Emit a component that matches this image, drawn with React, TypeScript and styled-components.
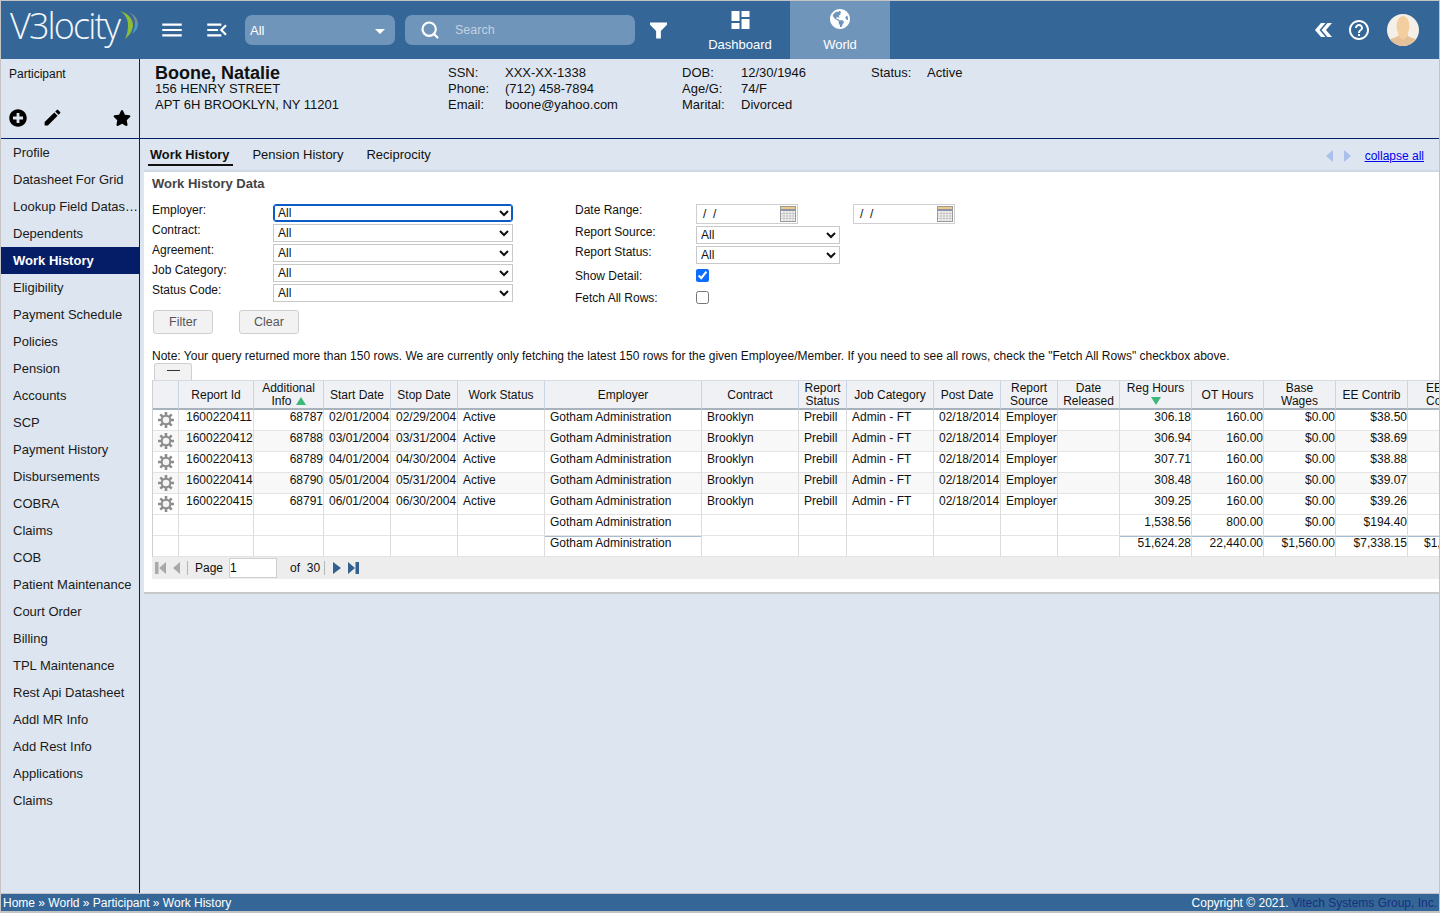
import React from 'react'
import styled, {createGlobalStyle} from 'styled-components'
import {FaGlobeAmericas, FaPlusCircle, FaStar} from 'react-icons/fa'
import {MdDashboard, MdEdit, MdHelpOutline, MdMenu, MdMenuOpen} from 'react-icons/md'
import {FiSearch} from 'react-icons/fi'

const GlobalStyle = createGlobalStyle`
  html, body {
    margin: 0;
    padding: 0;
    background: #c4c4c4;
  }
  body {
    font-family: "Liberation Sans", Arial, sans-serif;
    color: #111;
  }
`

const navItems = [
    'Profile', 'Datasheet For Grid', 'Lookup Field Datasheet', 'Dependents', 'Work History', 'Eligibility',
    'Payment Schedule', 'Policies', 'Pension', 'Accounts', 'SCP', 'Payment History', 'Disbursements', 'COBRA',
    'Claims', 'COB', 'Patient Maintenance', 'Court Order', 'Billing', 'TPL Maintenance', 'Rest Api Datasheet',
    'Addl MR Info', 'Add Rest Info', 'Applications', 'Claims',
]

interface Column {
    w: number
    label: string
    second?: string
    sort?: 'up' | 'down'
    cut?: boolean
}

const columns: Column[] = [
    {w: 26, label: ''},
    {w: 75, label: 'Report Id'},
    {w: 70, label: 'Additional', second: 'Info', sort: 'up'},
    {w: 67, label: 'Start Date'},
    {w: 67, label: 'Stop Date'},
    {w: 87, label: 'Work Status'},
    {w: 157, label: 'Employer'},
    {w: 97, label: 'Contract'},
    {w: 48, label: 'Report', second: 'Status'},
    {w: 87, label: 'Job Category'},
    {w: 67, label: 'Post Date'},
    {w: 57, label: 'Report', second: 'Source'},
    {w: 62, label: 'Date', second: 'Released'},
    {w: 72, label: 'Reg Hours', sort: 'down'},
    {w: 72, label: 'OT Hours'},
    {w: 72, label: 'Base', second: 'Wages'},
    {w: 72, label: 'EE Contrib'},
    {w: 72, label: 'EE', second: 'Contrib', cut: true},
]

const rows = [
    ['1600220411', '68787', '02/01/2004', '02/29/2004', '306.18', '$38.50'],
    ['1600220412', '68788', '03/01/2004', '03/31/2004', '306.94', '$38.69'],
    ['1600220413', '68789', '04/01/2004', '04/30/2004', '307.71', '$38.88'],
    ['1600220414', '68790', '05/01/2004', '05/31/2004', '308.48', '$39.07'],
    ['1600220415', '68791', '06/01/2004', '06/30/2004', '309.25', '$39.26'],
]

function Calendar() {
    return (
        <svg width="16" height="16" viewBox="0 0 16 16">
            <rect x="0.5" y="0.5" width="15" height="15" fill="#f4f4f4" stroke="#9a9a9a"/>
            <rect x="1" y="1" width="14" height="2" fill="#f0c987"/>
            <rect x="1" y="3" width="14" height="2" fill="#8d93a8"/>
            <path d="M1 7.5h14M1 10h14M1 12.5h14M4 5v10M7 5v10M10 5v10M13 5v10" stroke="#c9c9c9" strokeWidth="1"/>
        </svg>
    )
}

function Gear() {
    return (
        <svg width="18" height="18" viewBox="0 0 18 18">
            <path d="M9 1v16M1 9h16M3.300 3.300l11.400 11.400M14.700 3.300L3.300 14.700" stroke="#8c8c8c" strokeWidth="2.600"/>
            <circle cx="9" cy="9" r="5.300" fill="#8c8c8c"/>
            <circle cx="9" cy="9" r="3.300" fill="#f4f4f4"/>
        </svg>
    )
}

function PagerIcon({kind, active}: {kind: 'first' | 'prev' | 'next' | 'last', active?: boolean}) {
    const color = active ? '#33618f' : '#a9a9a9'
    return (
        <svg width="12" height="14" viewBox="0 0 12 14">
            {kind === 'first' && <path d="M0 1h3.500v12H0zM11 1v12L4 7z" fill={color}/>}
            {kind === 'prev' && <path d="M9 1v12L2 7z" fill={color}/>}
            {kind === 'next' && <path d="M1 1v12l8-6z" fill={color}/>}
            {kind === 'last' && <path d="M11 1H7.500v12H11zM0 1v12l7-6z" fill={color}/>}
        </svg>
    )
}

function Avatar() {
    return (
        <svg width="32" height="32" viewBox="0 0 32 32">
            <clipPath id="avatar-clip"><circle cx="16" cy="16" r="16"/></clipPath>
            <g clipPath="url(#avatar-clip)">
                <rect width="32" height="32" fill="#f4efe7"/>
                <path d="M0 32v-5c4-3 8-3 11-5v-3h10v3c3 2 7 2 11 5v5z" fill="#e4c199"/>
                <ellipse cx="16" cy="12" rx="6.500" ry="10" fill="#f3cf9f"/>
                <path d="M11 19h10v3l-5 4-5-4z" fill="#f3cf9f"/>
            </g>
        </svg>
    )
}

function Swoosh() {
    return (
        <SwooshSvg width="20" height="30" viewBox="0 0 20 30">
            <path d="M0 0c5 3 8 8 8 14 0 5-1 10-3 14 5-4 8-9 8-14C13 8 8 2 0 0z" fill="#8dbb3a"/>
            <path d="M9 1c4 3 6 7 6 12l3 1c0-6-3-10-9-13z" fill="#7d8a99"/>
            <path d="M15 12c0 4-1 7-3 11 4-3 6-6 6-10z" fill="#4b9cc4"/>
        </SwooshSvg>
    )
}

function DoubleChevron() {
    return (
        <svg width="17" height="14" viewBox="0 0 17 14">
            <path d="M6 0L0 7l6 7h4.500L4.500 7l6-7zM12.500 0l-6 7 6 7H17l-6-7 6-7z" fill="#fff"/>
        </svg>
    )
}

function Field({label, children}: {label: string, children: React.ReactNode}) {
    return (
        <FieldRow>
            <FieldLabel>{label}</FieldLabel>
            {children}
        </FieldRow>
    )
}

function Dropdown({wide, focused}: {wide?: boolean, focused?: boolean}) {
    return (
        <Select $wide={wide} $focused={focused} defaultValue="All">
            <option>All</option>
        </Select>
    )
}

export default function App() {
    return (
        <Page>
            <GlobalStyle/>
            <TopBar>
                <Logo>V3locity<Swoosh/></Logo>
                <BarIcon><MdMenu size={26}/></BarIcon>
                <BarIcon><MdMenuOpen size={26}/></BarIcon>
                <AllBox>All<Caret/></AllBox>
                <SearchBox><FiSearch size={20} strokeWidth={2.6}/><SearchText>Search</SearchText></SearchBox>
                <FunnelIcon width="17" height="18" viewBox="0 0 18 18">
                    <path d="M0 1h18v2.500l-6.500 6.500v8h-5v-8L0 3.500z" fill="#fff"/>
                </FunnelIcon>
                <BarTab>
                    <MdDashboard size={25}/>
                    <span>Dashboard</span>
                </BarTab>
                <BarTab $active>
                    <FaGlobeAmericas size={20}/>
                    <span>World</span>
                </BarTab>
                <BarRight>
                    <DoubleChevron/>
                    <MdHelpOutline size={24}/>
                    <Avatar/>
                </BarRight>
            </TopBar>
            <Main>
                <Aside>
                    <ParticipantBox>
                        <ParticipantTitle>Participant</ParticipantTitle>
                        <ParticipantTools>
                            <FaPlusCircle size={18}/>
                            <MdEdit size={21}/>
                            <StarWrap><FaStar size={18}/></StarWrap>
                        </ParticipantTools>
                    </ParticipantBox>
                    <NavList>
                        {navItems.map((item, i) => (
                            <NavItem key={i} $active={item === 'Work History'}>{item}</NavItem>
                        ))}
                    </NavList>
                </Aside>
                <Content>
                    <PersonHeader>
                        <PersonMain>
                            <PersonName>Boone, Natalie</PersonName>
                            <div>156 HENRY STREET</div>
                            <div>APT 6H BROOKLYN, NY 11201</div>
                        </PersonMain>
                        <PersonGrid $label={57} $value={177}>
                            <span>SSN:</span><span>XXX-XX-1338</span>
                            <span>Phone:</span><span>(712) 458-7894</span>
                            <span>Email:</span><span>boone@yahoo.com</span>
                        </PersonGrid>
                        <PersonGrid $label={59} $value={130}>
                            <span>DOB:</span><span>12/30/1946</span>
                            <span>Age/G:</span><span>74/F</span>
                            <span>Marital:</span><span>Divorced</span>
                        </PersonGrid>
                        <PersonGrid $label={56} $value={80}>
                            <span>Status:</span><span>Active</span>
                        </PersonGrid>
                    </PersonHeader>
                    <TabBar>
                        <Tab $active>Work History</Tab>
                        <Tab>Pension History</Tab>
                        <Tab>Reciprocity</Tab>
                        <TabEnd>
                            <TabArrow width="8" height="12" viewBox="0 0 8 12"><path d="M7 0v12L0 6z" fill="#a9c0ea"/></TabArrow>
                            <TabArrow width="8" height="12" viewBox="0 0 8 12"><path d="M1 0v12l7-6z" fill="#a9c0ea"/></TabArrow>
                            <CollapseLink href="#">collapse all</CollapseLink>
                        </TabEnd>
                    </TabBar>
                    <Panel>
                        <PanelTitle>Work History Data</PanelTitle>
                        <FilterForm>
                            <FilterColumn>
                                <Field label="Employer:"><Dropdown wide focused/></Field>
                                <Field label="Contract:"><Dropdown wide/></Field>
                                <Field label="Agreement:"><Dropdown wide/></Field>
                                <Field label="Job Category:"><Dropdown wide/></Field>
                                <Field label="Status Code:"><Dropdown wide/></Field>
                                <Buttons>
                                    <FormButton>Filter</FormButton>
                                    <FormButton>Clear</FormButton>
                                </Buttons>
                            </FilterColumn>
                            <FilterColumn $right>
                                <DateRow>
                                    <FieldLabel>Date Range:</FieldLabel>
                                    <DateBox>/ &nbsp;/<Calendar/></DateBox>
                                    <DateBox>/ &nbsp;/<Calendar/></DateBox>
                                </DateRow>
                                <RightRow><FieldLabel>Report Source:</FieldLabel><Dropdown/></RightRow>
                                <RightRow><FieldLabel>Report Status:</FieldLabel><Dropdown/></RightRow>
                                <CheckRow><FieldLabel>Show Detail:</FieldLabel><Check type="checkbox" defaultChecked/></CheckRow>
                                <CheckRow><FieldLabel>Fetch All Rows:</FieldLabel><Check type="checkbox"/></CheckRow>
                            </FilterColumn>
                        </FilterForm>
                        <Note>Note: Your query returned more than 150 rows. We are currently only fetching the latest 150 rows for the given Employee/Member. If you need to see all rows, check the "Fetch All Rows" checkbox above.</Note>
                        <GridToggle><span/></GridToggle>
                        <GridWrap>
                            <Grid>
                                <colgroup>
                                    {columns.map((c, i) => <col key={i} style={{width: c.w}}/>)}
                                </colgroup>
                                <thead>
                                    <tr>
                                        {columns.map((c, i) => (
                                            <Th key={i} $cut={c.cut}>
                                                {c.label}
                                                {c.second && <br/>}
                                                {c.second}
                                                {c.sort === 'down' && <br/>}
                                                {c.sort && <SortMark $down={c.sort === 'down'}/>}
                                            </Th>
                                        ))}
                                    </tr>
                                </thead>
                                <tbody>
                                    {rows.map((r, i) => (
                                        <Tr key={r[0]} $odd={i % 2 === 1}>
                                            <GearCell><Gear/></GearCell>
                                            <Td $pad={7}>{r[0]}</Td>
                                            <Td $right>{r[1]}</Td>
                                            <Td $pad={5}>{r[2]}</Td>
                                            <Td $pad={5}>{r[3]}</Td>
                                            <Td $pad={5}>Active</Td>
                                            <Td $pad={5}>Gotham Administration</Td>
                                            <Td $pad={5}>Brooklyn</Td>
                                            <Td $pad={5}>Prebill</Td>
                                            <Td $pad={5}>Admin - FT</Td>
                                            <Td $pad={5}>02/18/2014</Td>
                                            <Td $pad={5}>Employer</Td>
                                            <Td/>
                                            <Td $right>{r[4]}</Td>
                                            <Td $right>160.00</Td>
                                            <Td $right>$0.00</Td>
                                            <Td $right>{r[5]}</Td>
                                            <Td/>
                                        </Tr>
                                    ))}
                                    <Tr>
                                        <Td/><Td/><Td/><Td/><Td/><Td/>
                                        <Td $pad={5}>Gotham Administration</Td>
                                        <Td/><Td/><Td/><Td/><Td/><Td/>
                                        <Td $right>1,538.56</Td>
                                        <Td $right>800.00</Td>
                                        <Td $right>$0.00</Td>
                                        <Td $right>$194.40</Td>
                                        <Td/>
                                    </Tr>
                                    <Tr>
                                        <Td/><Td/><Td/><Td/><Td/><Td/>
                                        <Td $pad={5} $total>Gotham Administration</Td>
                                        <Td/><Td/><Td/><Td/><Td/><Td/>
                                        <Td $right $total>51,624.28</Td>
                                        <Td $right $total>22,440.00</Td>
                                        <Td $right $total>$1,560.00</Td>
                                        <Td $right $total>$7,338.15</Td>
                                        <Td $total $pad={16}>$1,560.00</Td>
                                    </Tr>
                                </tbody>
                            </Grid>
                        </GridWrap>
                        <Pager>
                            <PagerIcon kind="first"/>
                            <PagerIcon kind="prev"/>
                            <PagerSep/>
                            <span>Page</span>
                            <PageInput defaultValue="1"/>
                            <OfText>of &nbsp;30</OfText>
                            <PagerSep/>
                            <PagerIcon kind="next" active/>
                            <PagerIcon kind="last" active/>
                        </Pager>
                    </Panel>
                </Content>
            </Main>
            <Footer>
                <span>Home » World » Participant » Work History</span>
                <span>Copyright © 2021. <VendorName>Vitech Systems Group, Inc.</VendorName></span>
            </Footer>
        </Page>
    )
}

const Page = styled.div`
  width: 1440px;
  height: 913px;
  box-sizing: border-box;
  padding: 1px 1px 2px 1px;
  display: flex;
  flex-direction: column;
  overflow: hidden;
`

const TopBar = styled.header`
  height: 58px;
  flex: none;
  display: flex;
  align-items: center;
  background: #346798;
  color: #fff;
`

const Logo = styled.div`
  position: relative;
  width: 139px;
  flex: none;
  box-sizing: border-box;
  padding-left: 9px;
  margin-top: -8px;
  font-family: "Open Sans", sans-serif;
  font-weight: 300;
  font-size: 36px;
  letter-spacing: -1.9px;
  line-height: 44px;
  color: #f3f6fa;
`

const SwooshSvg = styled.svg`
  position: absolute;
  left: 119px;
  top: 7px;
`

const BarIcon = styled.div`
  display: flex;
  margin-left: 19px;
`

const AllBox = styled.div`
  position: relative;
  width: 150px;
  height: 30px;
  margin-left: 15px;
  box-sizing: border-box;
  padding-left: 5px;
  display: flex;
  align-items: center;
  background: #7095ba;
  border-radius: 7px;
  font-size: 13px;
`

const Caret = styled.span`
  position: absolute;
  right: 10px;
  top: 14px;
  border-left: 5px solid transparent;
  border-right: 5px solid transparent;
  border-top: 5px solid #fff;
`

const SearchBox = styled.div`
  width: 230px;
  height: 30px;
  margin-left: 10px;
  box-sizing: border-box;
  padding-left: 15px;
  display: flex;
  align-items: center;
  gap: 15px;
  background: #7095ba;
  border-radius: 7px;
  font-size: 12.500px;
`

const SearchText = styled.span`
  color: #c3d2e2;
`

const FunnelIcon = styled.svg`
  margin-left: 15px;
  margin-top: -1px;
`

const BarTab = styled.div<{$active?: boolean}>`
  width: 100px;
  height: 58px;
  margin-left: ${p => p.$active ? 0 : 23}px;
  box-sizing: border-box;
  padding-top: 7px;
  display: flex;
  flex-direction: column;
  align-items: center;
  gap: ${p => p.$active ? 7 : 5}px;
  background: ${p => p.$active ? '#7095ba' : 'transparent'};
  font-size: 13px;

  svg {
    height: ${p => p.$active ? 22 : 24}px;
  }
`

const BarRight = styled.div`
  margin-left: auto;
  margin-right: 20px;
  display: flex;
  align-items: center;
  gap: 16px;

  svg:first-child {
    margin-right: -1px;
  }
`

const Main = styled.div`
  flex: 1;
  display: flex;
  min-height: 0;
  background: #dde6f0;
`

const Aside = styled.aside`
  width: 138px;
  flex: none;
  border-right: 1px solid #051d66;
`

const ParticipantBox = styled.div`
  height: 80px;
  box-sizing: border-box;
  border-bottom: 1px solid #051d66;
  padding: 8px 8px 0;
  display: flex;
  flex-direction: column;
  justify-content: space-between;
  font-size: 12px;
`

const ParticipantTitle = styled.div`
  line-height: 15px;
`

const ParticipantTools = styled.div`
  display: flex;
  align-items: center;
  gap: 15px;
  height: 21px;
  margin-bottom: 10px;
  color: #000;
`

const StarWrap = styled.span`
  display: flex;
  margin-left: auto;
`

const NavList = styled.nav`
  display: flex;
  flex-direction: column;
`

const NavItem = styled.div<{$active?: boolean}>`
  height: 27px;
  line-height: 27px;
  padding: 0 0 0 12px;
  font-size: 13px;
  font-weight: ${p => p.$active ? 700 : 400};
  color: ${p => p.$active ? '#fff' : '#1a1a1a'};
  background: ${p => p.$active ? '#051d66' : 'transparent'};
  white-space: nowrap;
  overflow: hidden;
  text-overflow: ellipsis;
`

const Content = styled.main`
  flex: 1;
  min-width: 0;
`

const PersonHeader = styled.div`
  height: 80px;
  box-sizing: border-box;
  border-bottom: 1px solid #051d66;
  padding: 5px 0 0 15px;
  display: flex;
  font-size: 13px;
  line-height: 16px;
`

const PersonMain = styled.div`
  width: 293px;
`

const PersonName = styled.div`
  font-size: 18px;
  font-weight: 700;
  line-height: 16px;
  margin-top: 1px;
`

const PersonGrid = styled.div<{$label: number, $value: number}>`
  display: grid;
  grid-template-columns: ${p => p.$label}px ${p => p.$value}px;
  grid-auto-rows: 16px;
  margin-top: 1px;
`

const TabBar = styled.div`
  height: 31px;
  box-sizing: border-box;
  padding: 8px 15px 0 8px;
  display: flex;
  align-items: flex-start;
  gap: 19px;
  font-size: 13px;
`

const Tab = styled.div<{$active?: boolean}>`
  height: 17px;
  line-height: 16px;
  padding: 0 4px 0 ${p => p.$active ? 2 : 0}px;
  font-size: ${p => p.$active ? 12.8 : 13}px;
  font-weight: ${p => p.$active ? 700 : 400};
  border-bottom: ${p => p.$active ? '2px solid #111' : 'none'};
`

const TabEnd = styled.div`
  margin-left: auto;
  margin-top: 1px;
  display: flex;
  align-items: center;
  gap: 9px;
  height: 16px;
`

const TabArrow = styled.svg`
  display: block;
`

const CollapseLink = styled.a`
  margin-left: 5px;
  font-size: 12px;
  color: #0000ee;
`

const Panel = styled.section`
  margin-left: 4px;
  height: 424px;
  box-sizing: border-box;
  padding: 0 0 0 8px;
  background: #fff;
  border-top: 2px solid #cfd9e5;
  border-bottom: 2px solid #c8c8c8;
  overflow: hidden;
  font-size: 12px;
`

const PanelTitle = styled.div`
  padding-top: 5px;
  font-size: 13px;
  font-weight: 700;
  line-height: 14px;
  color: #444;
`

const FilterForm = styled.div`
  display: flex;
  margin-top: 12px;
`

const FilterColumn = styled.div<{$right?: boolean}>`
  width: ${p => p.$right ? 600 : 423}px;
  display: flex;
  flex-direction: column;
`

const FieldRow = styled.div`
  height: 20px;
  display: flex;
`

const FieldLabel = styled.div`
  width: 121px;
  flex: none;
  line-height: 14px;
  white-space: nowrap;
`

const Select = styled.select<{$wide?: boolean, $focused?: boolean}>`
  width: ${p => p.$wide ? 240 : 144}px;
  height: 18px;
  margin-top: 1px;
  padding: 0;
  box-sizing: border-box;
  background: #fff;
  border: 1px solid ${p => p.$focused ? '#0b5cc4' : '#c8c8c8'};
  box-shadow: ${p => p.$focused ? 'inset 0 0 0 1px #0b5cc4' : 'none'};
  border-radius: ${p => p.$focused ? 3 : 0}px;
  font-family: inherit;
  font-size: 12px;
  color: #111;
  outline: none;
`

const Buttons = styled.div`
  display: flex;
  gap: 26px;
  margin-top: 7px;
  margin-left: 1px;
`

const FormButton = styled.button`
  width: 60px;
  height: 24px;
  padding: 0;
  background: #f2f2f2;
  border: 1px solid #cfcfcf;
  border-radius: 3px;
  font-family: inherit;
  font-size: 12.500px;
  color: #555;
`

const DateRow = styled.div`
  display: flex;
  height: 22px;
`

const RightRow = styled.div`
  display: flex;
  height: 20px;
`

const CheckRow = styled.div`
  display: flex;
  align-items: center;
  height: 22px;
`

const DateBox = styled.div`
  width: 102px;
  height: 20px;
  margin: 1px 55px 0 0;
  box-sizing: border-box;
  padding: 0 1px 0 6px;
  display: flex;
  align-items: center;
  justify-content: space-between;
  border: 1px solid #cfcfcf;
`

const Check = styled.input`
  width: 13px;
  height: 13px;
  margin: -2px 0 0;
  accent-color: #0b6cff;
`

const Note = styled.div`
  margin-top: 15px;
  line-height: 14px;
  white-space: nowrap;
`

const GridToggle = styled.div`
  width: 38px;
  height: 17px;
  margin: 0 0 0 2px;
  box-sizing: border-box;
  padding-top: 6px;
  display: flex;
  justify-content: center;
  background: #f2f2f2;
  border: 1px solid #cfcfcf;
  border-bottom: none;
  border-radius: 3px 3px 0 0;

  span {
    width: 13px;
    height: 1px;
    background: #333;
  }
`

const GridWrap = styled.div`
  border-left: 1px solid #cfcfcf;
  overflow: hidden;
`

const Grid = styled.table`
  width: 1327px;
  table-layout: fixed;
  border-collapse: separate;
  border-spacing: 0;
`

const Th = styled.th<{$cut?: boolean}>`
  height: 30px;
  padding: 1px 0 0 ${p => p.$cut ? 18 : 0}px;
  box-sizing: border-box;
  background: #eff1f4;
  border-top: 1px solid #d4dbe3;
  border-right: 1px solid #c9d5e4;
  border-bottom: 2px solid #a8b2bd;
  font-weight: 400;
  font-size: 12px;
  line-height: 13px;
  text-align: ${p => p.$cut ? 'left' : 'center'};
  white-space: nowrap;
`

const SortMark = styled.span<{$down?: boolean}>`
  display: inline-block;
  margin-left: ${p => p.$down ? 0 : 4}px;
  border-left: 5px solid transparent;
  border-right: 5px solid transparent;
  ${p => p.$down ? 'border-top: 8px solid #3cb878;' : 'border-bottom: 8px solid #3cb878;'}
`

const Tr = styled.tr<{$odd?: boolean}>`
  background: ${p => p.$odd ? '#f8f8f8' : '#fff'};
`

const Td = styled.td<{$right?: boolean, $pad?: number, $total?: boolean}>`
  height: 21px;
  box-sizing: border-box;
  padding: 0 0 0 ${p => p.$pad || 0}px;
  border-right: 1px solid #dcdcdc;
  border-bottom: 1px solid #e4e4e4;
  ${p => p.$total ? 'box-shadow: inset 0 1px 0 #a9bdd2;' : ''}
  font-size: 12px;
  line-height: 14px;
  vertical-align: top;
  text-align: ${p => p.$right ? 'right' : 'left'};
  white-space: nowrap;
  overflow: hidden;
`

const GearCell = styled.td`
  height: 21px;
  box-sizing: border-box;
  padding: 1px 0 0;
  border-right: 1px solid #dcdcdc;
  border-bottom: 1px solid #e4e4e4;
  line-height: 0;
  vertical-align: top;
  text-align: center;
`

const Pager = styled.div`
  height: 22px;
  box-sizing: border-box;
  padding-left: 3px;
  display: flex;
  align-items: center;
  gap: 4px;
  background: #ededed;
  font-size: 12px;
`

const PagerSep = styled.span`
  width: 1px;
  height: 14px;
  margin-right: 3px;
  background: #b5b5b5;
`

const PageInput = styled.input`
  width: 48px;
  height: 20px;
  box-sizing: border-box;
  margin-left: 2px;
  padding: 0;
  border: 1px solid #cfcfcf;
  font-family: inherit;
  font-size: 12px;
`

const OfText = styled.span`
  margin-left: 9px;
`

const Footer = styled.footer`
  height: 17px;
  flex: none;
  margin-top: 1px;
  box-sizing: border-box;
  padding: 0 2px;
  display: flex;
  justify-content: space-between;
  align-items: center;
  background: #346798;
  color: #fff;
  font-size: 12px;
`

const VendorName = styled.span`
  color: #17307a;
`
